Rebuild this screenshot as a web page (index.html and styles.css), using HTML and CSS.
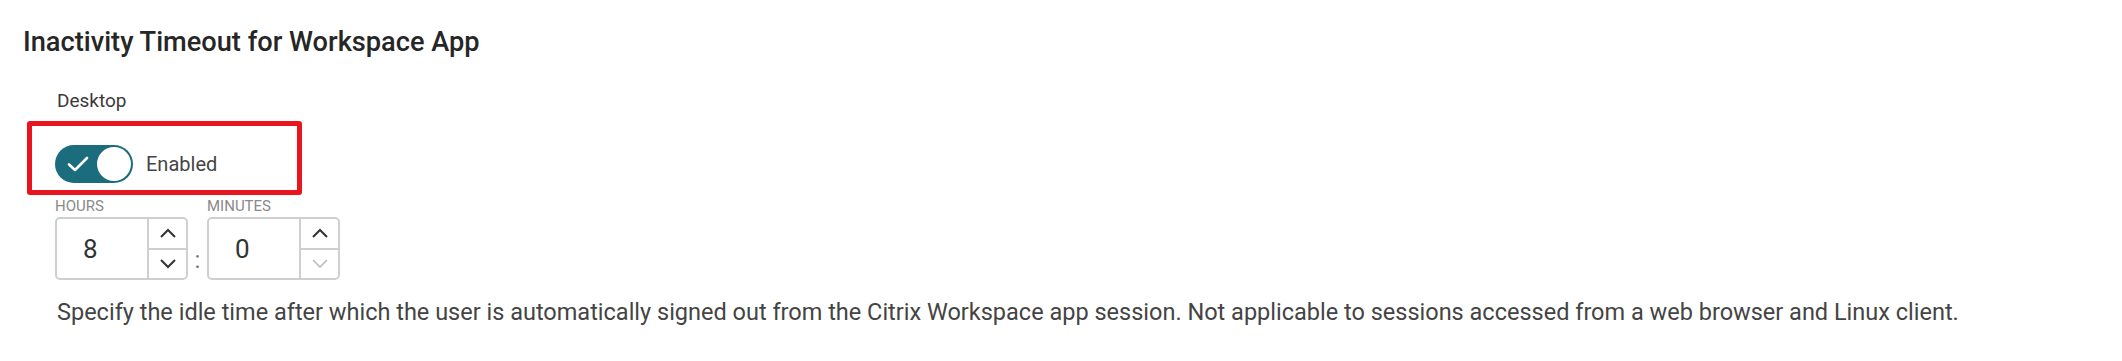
FILE: index.html
```html
<!DOCTYPE html>
<html lang="en">
<head>
  <meta charset="UTF-8">
  <meta name="viewport" content="width=device-width, initial-scale=1.0">
  <title>Inactivity Timeout</title>
  <link rel="stylesheet" href="styles.css">
</head>
<body>
  <div class="setting">
    <h2 class="setting-title">Inactivity Timeout for Workspace App</h2>

    <div class="section">
      <div class="section-label">Desktop</div>

      <div class="highlight">
        <div class="toggle">
          <span class="toggle-track">
            <svg class="toggle-check" width="22" height="18" viewBox="0 0 22 18">
              <path d="M2 9.5 L8 15 L20 3" fill="none" stroke="#fff" stroke-width="2.6" stroke-linecap="round" stroke-linejoin="round"/>
            </svg>
            <span class="toggle-knob"></span>
          </span>
          <span class="toggle-label">Enabled</span>
        </div>
      </div>

      <div class="time-row">
        <div class="time-field">
          <div class="time-caption">HOURS</div>
          <div class="spinner">
            <div class="spinner-value">8</div>
            <div class="spinner-buttons">
              <button class="spin-btn">
                <svg width="18" height="11" viewBox="0 0 18 11"><path d="M2 9 L9 2 L16 9" fill="none" stroke="#333" stroke-width="2"/></svg>
              </button>
              <button class="spin-btn">
                <svg width="18" height="11" viewBox="0 0 18 11"><path d="M2 2 L9 9 L16 2" fill="none" stroke="#333" stroke-width="2"/></svg>
              </button>
            </div>
          </div>
        </div>

        <div class="time-sep">:</div>

        <div class="time-field">
          <div class="time-caption">MINUTES</div>
          <div class="spinner">
            <div class="spinner-value">0</div>
            <div class="spinner-buttons">
              <button class="spin-btn">
                <svg width="18" height="11" viewBox="0 0 18 11"><path d="M2 9 L9 2 L16 9" fill="none" stroke="#333" stroke-width="2"/></svg>
              </button>
              <button class="spin-btn disabled">
                <svg width="18" height="11" viewBox="0 0 18 11"><path d="M2 2 L9 9 L16 2" fill="none" stroke="#bdbdbd" stroke-width="1.6"/></svg>
              </button>
            </div>
          </div>
        </div>
      </div>
    </div>

    <p class="setting-help">Specify the idle time after which the user is automatically signed out from the Citrix Workspace app session. Not applicable to sessions accessed from a web browser and Linux client.</p>
  </div>
</body>
</html>
```

FILE: styles.css
```css
body {
  margin: 0;
  background: #fff;
  font-family: Roboto, "Liberation Sans", Arial, sans-serif;
  color: #333;
}

.setting {
  padding: 26px 0 0 23px;
}

.setting-title {
  margin: 0;
  font-size: 27.2px;
  font-weight: 500;
  line-height: 32px;
  color: #262626;
}

.section {
  padding-left: 4px;
}

.section-label {
  margin: 30px 0 0 30px;
  font-size: 19px;
  line-height: 26px;
  color: #3a3a3a;
}

.highlight {
  width: 265px;
  height: 64px;
  margin-top: 7px;
  border: 5px solid #e8141e;
  border-radius: 3px;
  display: flex;
  align-items: flex-start;
}

.toggle {
  display: flex;
  align-items: center;
  margin: 19px 0 0 23px;
}

.toggle-track {
  width: 78px;
  height: 38px;
  border-radius: 19px;
  background: #1b6c7c;
  display: flex;
  align-items: center;
  justify-content: space-between;
  padding: 0 2px 0 12px;
  box-sizing: border-box;
}

.toggle-knob {
  width: 34px;
  height: 34px;
  border-radius: 50%;
  background: #fff;
}

.toggle-label {
  margin-left: 13px;
  font-size: 20px;
  color: #454545;
}

.time-row {
  display: flex;
  align-items: flex-end;
  margin: 2px 0 0 28px;
}

.time-caption {
  margin-bottom: 2px;
  font-size: 15px;
  line-height: 18px;
  color: #8a8a8a;
}

.spinner {
  display: flex;
  width: 133px;
  height: 63px;
  border: 2px solid #cfcfcf;
  border-radius: 5px;
  box-sizing: border-box;
}

.spinner-value {
  flex: 1;
  display: flex;
  align-items: center;
  padding-left: 26px;
  font-size: 26px;
  color: #333;
  border-right: 2px solid #cfcfcf;
}

.spinner-buttons {
  width: 37px;
  display: flex;
  flex-direction: column;
}

.spin-btn {
  flex: 1;
  border: none;
  background: none;
  padding: 0;
  display: flex;
  align-items: center;
  justify-content: center;
}

.spin-btn + .spin-btn {
  border-top: 2px solid #cfcfcf;
}

.time-sep {
  width: 19px;
  text-align: center;
  font-size: 24px;
  line-height: 40px;
  color: #777;
}

.setting-help {
  margin: 18px 0 0 34px;
  font-size: 23.5px;
  color: #444;
}
```
